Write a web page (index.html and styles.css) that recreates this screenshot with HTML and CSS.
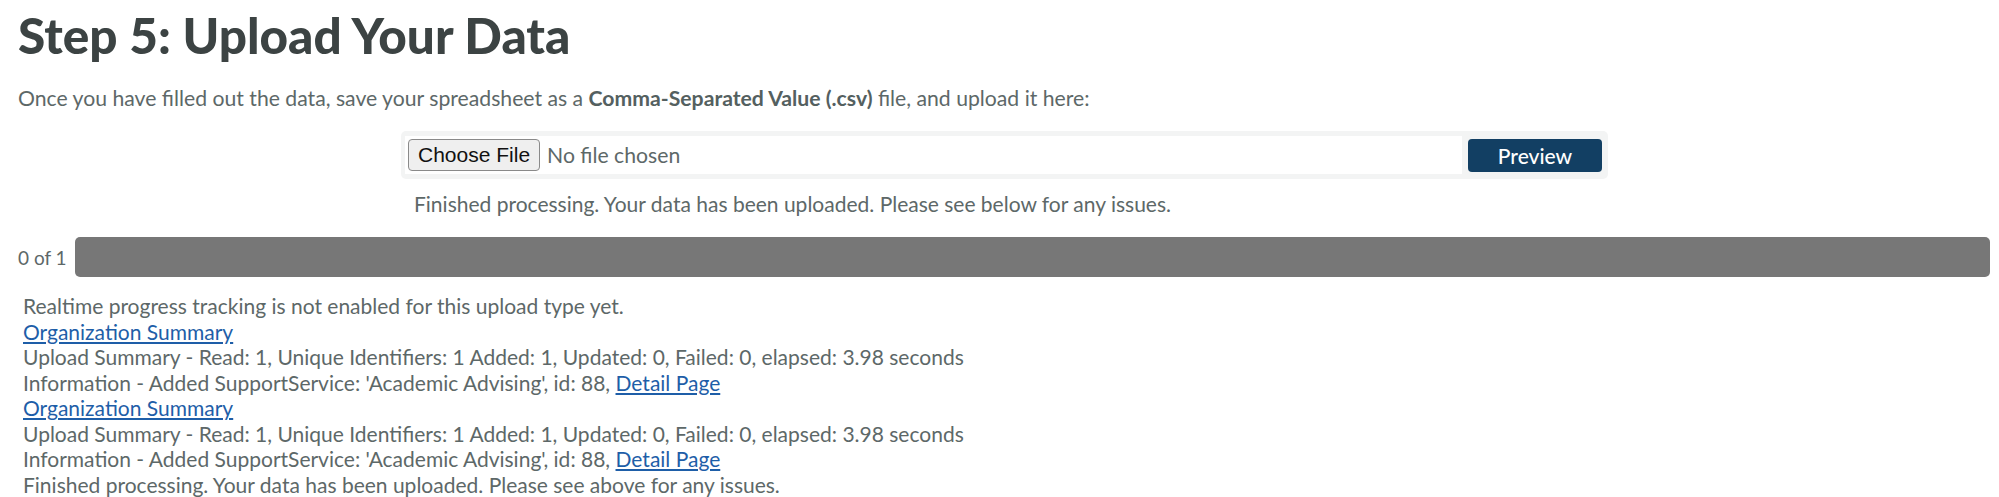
FILE: index.html
```html
<!DOCTYPE html>
<html>
<head>
<meta charset="utf-8">
<link rel="stylesheet" href="styles.css">
</head>
<body>
<div class="page">
  <h1 class="title">Step 5: Upload Your Data</h1>
  <p class="intro">Once you have filled out the data, save your spreadsheet as a <strong>Comma-Separated Value (.csv)</strong> file, and upload it here:</p>
  <div class="upload">
    <div class="upload-box">
      <div class="file-field">
        <span class="choose-btn">Choose File</span>
        <span class="file-name">No file chosen</span>
      </div>
      <button class="preview-btn">Preview</button>
    </div>
    <div class="status">Finished processing. Your data has been uploaded. Please see below for any issues.</div>
  </div>
  <div class="progress-row">
    <span class="progress-label">0 of 1</span>
    <div class="progress-bar"></div>
  </div>
  <div class="log">
    <div>Realtime progress tracking is not enabled for this upload type yet.</div>
    <div><a href="#">Organization Summary</a></div>
    <div>Upload Summary - Read: 1, Unique Identifiers: 1 Added: 1, Updated: 0, Failed: 0, elapsed: 3.98 seconds</div>
    <div>Information - Added SupportService: 'Academic Advising', id: 88, <a href="#">Detail Page</a></div>
    <div><a href="#">Organization Summary</a></div>
    <div>Upload Summary - Read: 1, Unique Identifiers: 1 Added: 1, Updated: 0, Failed: 0, elapsed: 3.98 seconds</div>
    <div>Information - Added SupportService: 'Academic Advising', id: 88, <a href="#">Detail Page</a></div>
    <div>Finished processing. Your data has been uploaded. Please see above for any issues.</div>
  </div>
</div>
</body>
</html>
```
FILE: styles.css
```css
html, body {
  margin: 0;
  padding: 0;
  background: #ffffff;
}
body {
  font-family: Lato, "Open Sans", sans-serif;
  color: #5d6868;
}
.page {
  padding: 0 9px 0 18px;
}
.title {
  margin: 0;
  padding-top: 7px;
  font-size: 49.5px;
  line-height: 56px;
  font-weight: 900;
  color: #3c4343;
  letter-spacing: 0;
}
.intro {
  margin: 22px 0 0 0;
  font-size: 21.2px;
  line-height: 26px;
}
.intro strong {
  font-weight: 700;
  color: #546060;
}
.upload {
  margin: 20px 0 0 383px;
  width: 1207px;
}
.upload-box {
  display: flex;
  align-items: center;
  gap: 6px;
  background: #f3f4f4;
  border-radius: 5px;
  padding: 5px 6px 5px 4px;
  height: 38px;
}
.file-field {
  flex: 1;
  display: flex;
  align-items: center;
  gap: 7px;
  background: #ffffff;
  height: 38px;
  padding-left: 3px;
}
.choose-btn {
  font-family: "Liberation Sans", Arial, sans-serif;
  font-size: 21px;
  color: #111;
  background: #efefef;
  border: 1px solid #8a8a8a;
  border-radius: 4px;
  padding: 3px 9px;
  line-height: 24px;
}
.file-name {
  font-size: 21.2px;
  color: #5d6868;
}
.preview-btn {
  width: 134px;
  height: 33px;
  border: none;
  border-radius: 4px;
  background: #123f63;
  color: #ffffff;
  font-family: Lato, sans-serif;
  font-size: 21px;
  font-weight: 500;
  padding: 0;
}
.status {
  margin: 12px 0 0 13px;
  font-size: 21px;
  line-height: 26px;
}
.progress-row {
  display: flex;
  align-items: center;
  gap: 8px;
  margin-top: 20px;
}
.progress-label {
  font-size: 19px;
  color: #5d6868;
}
.progress-bar {
  flex: 1;
  height: 40px;
  background: #777777;
  border-radius: 5px;
}
.log {
  margin-top: 16px;
  padding-left: 5px;
  font-size: 21px;
  line-height: 25.5px;
}
.log a {
  color: #1e5ea8;
  text-decoration: underline;
}
```
